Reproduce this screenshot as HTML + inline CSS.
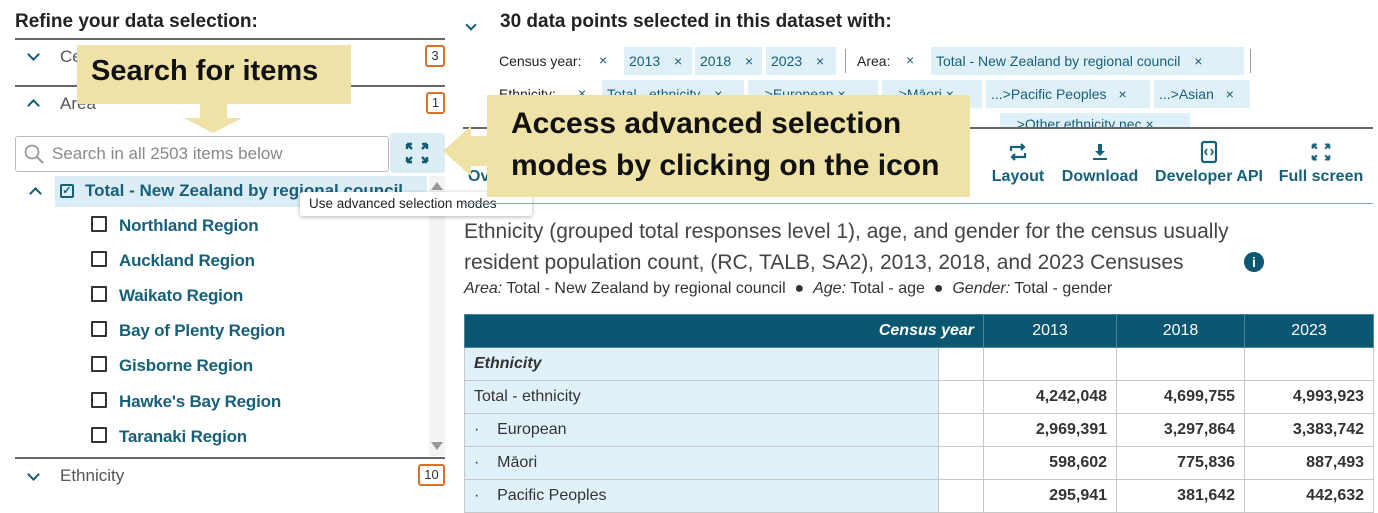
<!DOCTYPE html>
<html><head><meta charset="utf-8"><style>
*{margin:0;padding:0;box-sizing:border-box}
body{width:1378px;height:500px;overflow:hidden;background:#fff;font-family:"Liberation Sans",sans-serif;position:relative;color:#333}
.a{position:absolute;white-space:nowrap}
.chev{position:absolute;width:9px;height:9px;border-right:2.5px solid #0f5d73;border-bottom:2.5px solid #0f5d73}
.down{transform:rotate(45deg)}
.up{transform:rotate(-135deg)}
.badge{position:absolute;height:22px;border:2px solid #d9712c;border-radius:3px;font-size:13px;color:#333;text-align:center;line-height:18px}
.item{position:absolute;left:91px;font-size:17px;font-weight:bold;color:#17607a;white-space:nowrap;letter-spacing:-0.2px}
.item:before{content:"";display:inline-block;width:12px;height:12px;border:2px solid #333;border-radius:1px;margin-right:12px;vertical-align:-1px}
.chip{position:absolute;height:28px;background:#dff0f8;font-size:14px;color:#17607a;line-height:28px;padding-left:5px;white-space:nowrap;overflow:hidden}
.x{position:absolute;font-size:14px;color:#17607a}
.lbl{position:absolute;font-size:14px;color:#222}
.tb{position:absolute;top:168px;font-size:16px;color:#17607a;font-weight:bold;white-space:nowrap;transform:translateX(-50%)}
.callout{position:absolute;background:#efe2a7;color:#111;font-weight:bold}
table{table-layout:fixed}
td{border:1px solid #c8c8c8;height:33px;font-size:16px;padding:0 9px;overflow:hidden;white-space:nowrap}
</style></head><body>

<div class="a" style="left:15px;top:11px;font-size:19px;font-weight:bold;color:#222">Refine your data selection:</div>
<div class="a" style="left:15px;top:38px;width:430px;height:2px;background:#666"></div>
<div class="chev down" style="left:29px;top:50px"></div>
<div class="a" style="left:60px;top:47px;font-size:17px;color:#555">Census year</div>
<div class="badge" style="left:425px;top:45px;width:20px">3</div>
<div class="a" style="left:15px;top:85px;width:430px;height:2px;background:#666"></div>
<div class="chev up" style="left:29px;top:101px"></div>
<div class="a" style="left:60px;top:94px;font-size:17px;color:#555">Area</div>
<div class="badge" style="left:426px;top:92px;width:19px">1</div>

<div class="a" style="left:15px;top:136px;width:374px;height:36px;border:1px solid #bbb;border-radius:3px"></div>
<svg class="a" style="left:23px;top:143px" width="22" height="22" viewBox="0 0 22 22"><circle cx="9" cy="9" r="6.5" fill="none" stroke="#999" stroke-width="1.8"/><path d="M14 14l6 6" stroke="#999" stroke-width="2"/></svg>
<div class="a" style="left:52px;top:144px;font-size:17px;color:#888">Search in all 2503 items below</div>
<div class="a" style="left:390px;top:133px;width:55px;height:40px;background:#dcedf6;border-radius:3px"></div>
<svg class="a" style="left:405px;top:142px" width="24" height="22" viewBox="0 0 24 22" stroke="#0f5d73" stroke-width="2.4" fill="none"><path d="M2 2l5 5M2 2h5M2 2v5M22 2l-5 5M22 2h-5M22 2v5M2 20l5-5M2 20h5M2 20v-5M22 20l-5-5M22 20h-5M22 20v-5"/></svg>

<div class="a" style="left:55px;top:176px;width:372px;height:31px;background:#dcedf6"></div>
<div class="chev up" style="left:31px;top:189px"></div>
<div class="a" style="left:60px;top:184px;width:14px;height:14px;border:2px solid #17607a;border-radius:2px;font-size:11px;line-height:10px;text-align:center;color:#17607a;font-weight:bold">✓</div>
<div class="a" style="left:85px;top:181px;font-size:17px;font-weight:bold;color:#17607a">Total - New Zealand by regional council</div>
<div class="a" style="left:429px;top:176px;width:16px;height:280px;background:#f3f3f3"></div>
<div class="a" style="left:431px;top:182px;width:0;height:0;border-left:6px solid transparent;border-right:6px solid transparent;border-bottom:8px solid #999"></div>
<div class="a" style="left:431px;top:442px;width:0;height:0;border-left:6px solid transparent;border-right:6px solid transparent;border-top:8px solid #999"></div>
<div class="a" style="left:300px;top:192px;width:232px;height:24px;background:#fff;border-radius:3px;box-shadow:0 1px 4px rgba(0,0,0,.3);font-size:13.5px;color:#222;padding:4px 9px">Use advanced selection modes</div>

<div class="item" style="top:216px">Northland Region</div>
<div class="item" style="top:251px">Auckland Region</div>
<div class="item" style="top:286px">Waikato Region</div>
<div class="item" style="top:321px">Bay of Plenty Region</div>
<div class="item" style="top:356px">Gisborne Region</div>
<div class="item" style="top:392px">Hawke's Bay Region</div>
<div class="item" style="top:427px">Taranaki Region</div>

<div class="a" style="left:15px;top:457px;width:430px;height:2px;background:#666"></div>
<div class="chev down" style="left:29px;top:470px"></div>
<div class="a" style="left:60px;top:466px;font-size:17px;color:#555">Ethnicity</div>
<div class="badge" style="left:418px;top:464px;width:27px">10</div>

<!-- right -->
<div class="chev down" style="left:467px;top:21px;width:8px;height:8px"></div>
<div class="a" style="left:500px;top:11px;font-size:19px;font-weight:bold;color:#222">30 data points selected in this dataset with:</div>
<div class="lbl" style="left:499px;top:53px">Census year:</div><div class="x" style="left:599px;top:52px">×</div>
<div class="chip" style="left:624px;top:47px;width:68px">2013 <span style="margin-left:10px">×</span></div>
<div class="chip" style="left:695px;top:47px;width:67px">2018 <span style="margin-left:10px">×</span></div>
<div class="chip" style="left:766px;top:47px;width:70px">2023 <span style="margin-left:10px">×</span></div>
<div class="a" style="left:845px;top:49px;width:1px;height:24px;background:#999"></div>
<div class="lbl" style="left:857px;top:53px">Area:</div><div class="x" style="left:906px;top:52px">×</div>
<div class="chip" style="left:931px;top:47px;width:313px">Total - New Zealand by regional council <span style="margin-left:10px">×</span></div>
<div class="a" style="left:1250px;top:49px;width:1px;height:24px;background:#999"></div>
<div class="lbl" style="left:499px;top:86px">Ethnicity:</div><div class="x" style="left:578px;top:85px">×</div>
<div class="chip" style="left:602px;top:80px;width:142px">Total - ethnicity <span style="margin-left:10px">×</span></div>
<div class="chip" style="left:748px;top:80px;width:130px">...&gt;European ×</div>
<div class="chip" style="left:882px;top:80px;width:100px">...&gt;Māori ×</div>
<div class="chip" style="left:986px;top:80px;width:164px">...&gt;Pacific Peoples <span style="margin-left:8px">×</span></div>
<div class="chip" style="left:1154px;top:80px;width:96px">...&gt;Asian <span style="margin-left:8px">×</span></div>
<div class="chip" style="left:1000px;top:113px;width:190px;height:14px;line-height:22px">...&gt;Other ethnicity nec ×</div>
<div class="a" style="left:463px;top:127px;width:910px;height:2px;background:#666"></div>

<div class="a" style="left:468px;top:168px;font-size:16px;font-weight:bold;color:#17607a">Ove</div>
<svg class="a" style="left:1008px;top:142px" width="20" height="20" viewBox="0 0 20 20" stroke="#17607a" stroke-width="2.2" fill="none"><path d="M3 9V5h13M13 2l3 3-3 3M17 11v4H4M7 18l-3-3 3-3"/></svg>
<svg class="a" style="left:1090px;top:142px" width="20" height="20" viewBox="0 0 20 20" fill="#17607a"><path d="M8 2h4v7h3l-5 5-5-5h3z"/><rect x="3" y="16" width="14" height="2"/></svg>
<svg class="a" style="left:1199px;top:140px" width="20" height="24" viewBox="0 0 20 24" stroke="#17607a" stroke-width="2.2" fill="none"><rect x="3" y="2" width="14" height="20" rx="2"/><path d="M8 9l-2 3 2 3M12 9l2 3-2 3" stroke-width="1.6"/></svg>
<svg class="a" style="left:1311px;top:142px" width="20" height="20" viewBox="0 0 24 22" stroke="#17607a" stroke-width="2.4" fill="none"><path d="M2 2l5 5M2 2h5M2 2v5M22 2l-5 5M22 2h-5M22 2v5M2 20l5-5M2 20h5M2 20v-5M22 20l-5-5M22 20h-5M22 20v-5"/></svg>
<div class="tb" style="left:1018px">Layout</div>
<div class="tb" style="left:1100px">Download</div>
<div class="tb" style="left:1209px">Developer API</div>
<div class="tb" style="left:1321px">Full screen</div>
<div class="a" style="left:463px;top:203px;width:910px;height:1px;background:#7fb3c4"></div>

<div class="a" style="left:464px;top:216px;font-size:21px;color:#444;line-height:31px">Ethnicity (grouped total responses level 1), age, and gender for the census usually<br>resident population count, (RC, TALB, SA2), 2013, 2018, and 2023 Censuses</div>
<div class="a" style="left:1244px;top:252px;width:20px;height:20px;border-radius:50%;background:#0b5670;color:#fff;font-size:14px;font-weight:bold;text-align:center;line-height:20px">i</div>
<div class="a" style="left:464px;top:280px;font-size:16px;color:#333"><i>Area:</i> Total - New Zealand by regional council &nbsp;●&nbsp; <i>Age:</i> Total - age &nbsp;●&nbsp; <i>Gender:</i> Total - gender</div>

<table class="a" style="left:464px;top:314px;width:909px;border-collapse:collapse">
<colgroup><col style="width:474px"><col style="width:45px"><col style="width:133px"><col style="width:128px"><col style="width:129px"></colgroup>
<tr style="background:#0b5670;color:#fff"><td colspan="2" style="text-align:right;font-style:italic;font-weight:bold;border-color:#4d8899">Census year</td><td style="text-align:center;border-color:#4d8899">2013</td><td style="text-align:center;border-color:#4d8899">2018</td><td style="text-align:center;border-color:#4d8899">2023</td></tr>
<tr><td style="background:#e1f1fa;font-style:italic;font-weight:bold">Ethnicity</td><td></td><td></td><td></td><td></td></tr>
<tr><td style="background:#e1f1fa">Total - ethnicity</td><td></td><td style="text-align:right;font-weight:bold">4,242,048</td><td style="text-align:right;font-weight:bold">4,699,755</td><td style="text-align:right;font-weight:bold">4,993,923</td></tr>
<tr><td style="background:#e1f1fa">·&nbsp;&nbsp;&nbsp; European</td><td></td><td style="text-align:right;font-weight:bold">2,969,391</td><td style="text-align:right;font-weight:bold">3,297,864</td><td style="text-align:right;font-weight:bold">3,383,742</td></tr>
<tr><td style="background:#e1f1fa">·&nbsp;&nbsp;&nbsp; Māori</td><td></td><td style="text-align:right;font-weight:bold">598,602</td><td style="text-align:right;font-weight:bold">775,836</td><td style="text-align:right;font-weight:bold">887,493</td></tr>
<tr><td style="background:#e1f1fa">·&nbsp;&nbsp;&nbsp; Pacific Peoples</td><td></td><td style="text-align:right;font-weight:bold">295,941</td><td style="text-align:right;font-weight:bold">381,642</td><td style="text-align:right;font-weight:bold">442,632</td></tr>
</table>

<!-- callouts -->
<div class="callout" style="left:77px;top:45px;width:274px;height:59px;font-size:29px;padding:10px 0 0 14px">Search for items</div>
<div class="a" style="left:200px;top:104px;width:27px;height:14px;background:#efe2a7"></div>
<div class="a" style="left:184px;top:118px;width:0;height:0;border-left:29px solid transparent;border-right:29px solid transparent;border-top:15px solid #efe2a7"></div>
<div class="callout" style="left:487px;top:95px;width:483px;height:102px;font-size:30px;line-height:42px;padding:8px 0 0 24px">Access advanced selection<br>modes by clicking on the icon</div>
<div class="a" style="left:443px;top:126px;width:0;height:0;border-top:25px solid transparent;border-bottom:25px solid transparent;border-right:28px solid #efe2a7"></div>
<div class="a" style="left:470px;top:136px;width:18px;height:30px;background:#efe2a7"></div>
</body></html>
